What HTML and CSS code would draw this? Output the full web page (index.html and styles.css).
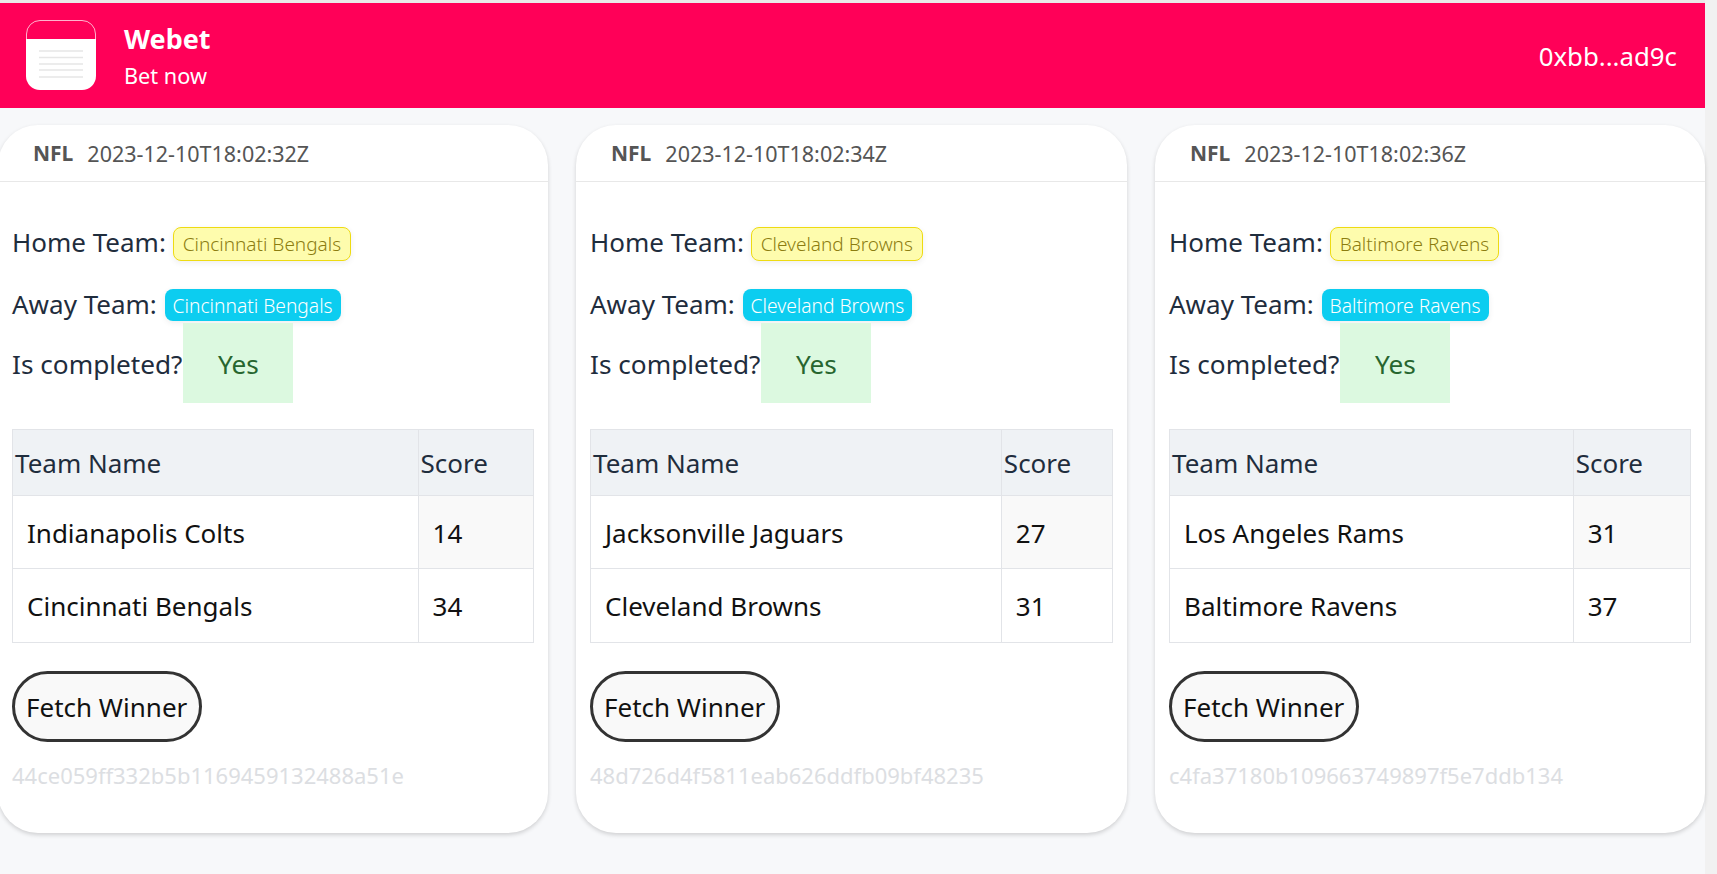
FILE: index.html
```html
<!DOCTYPE html>
<html lang="en">
<head>
  <meta charset="UTF-8">
  <title>Webet</title>
  <link rel="stylesheet" href="styles.css">
</head>
<body>
  <div class="page">
    <header class="topbar">
      <div class="brand">
        <svg class="logo" width="70" height="70" viewBox="0 0 70 70">
          <path d="M0.5 19V14A13.5 13.5 0 0 1 14 0.5H56A13.5 13.5 0 0 1 69.5 14V19" fill="none" stroke="#fff" stroke-opacity="0.7"/>
          <path d="M0 19H70V56A14 14 0 0 1 56 70H14A14 14 0 0 1 0 56Z" fill="#fff"/>
          <path d="M13 31H57M13 37.5H57M13 44H57M13 50H57M13 57H57" stroke="#e6e6e6" stroke-width="1.5"/>
        </svg>
        <div class="brand-text">
          <div class="brand-name">Webet</div>
          <div class="brand-sub">Bet now</div>
        </div>
      </div>
      <div class="address">0xbb...ad9c</div>
    </header>

    <main class="cards">
      <section class="card">
        <div class="card-head"><b>NFL</b><span>2023-12-10T18:02:32Z</span></div>
        <div class="card-body">
          <div class="line line-home">Home Team: <span class="badge badge-home">Cincinnati Bengals</span></div>
          <div class="line line-away">Away Team: <span class="badge badge-away">Cincinnati Bengals</span></div>
          <div class="line line-done">Is completed?<span class="done">Yes</span></div>
          <table class="scores">
            <thead><tr><th>Team Name</th><th>Score</th></tr></thead>
            <tbody>
              <tr><td>Indianapolis Colts</td><td class="alt">14</td></tr>
              <tr><td>Cincinnati Bengals</td><td>34</td></tr>
            </tbody>
          </table>
          <button class="fetch">Fetch Winner</button>
          <div class="hash">44ce059ff332b5b1169459132488a51e</div>
        </div>
      </section>

      <section class="card">
        <div class="card-head"><b>NFL</b><span>2023-12-10T18:02:34Z</span></div>
        <div class="card-body">
          <div class="line line-home">Home Team: <span class="badge badge-home">Cleveland Browns</span></div>
          <div class="line line-away">Away Team: <span class="badge badge-away">Cleveland Browns</span></div>
          <div class="line line-done">Is completed?<span class="done">Yes</span></div>
          <table class="scores">
            <thead><tr><th>Team Name</th><th>Score</th></tr></thead>
            <tbody>
              <tr><td>Jacksonville Jaguars</td><td class="alt">27</td></tr>
              <tr><td>Cleveland Browns</td><td>31</td></tr>
            </tbody>
          </table>
          <button class="fetch">Fetch Winner</button>
          <div class="hash">48d726d4f5811eab626ddfb09bf48235</div>
        </div>
      </section>

      <section class="card">
        <div class="card-head"><b>NFL</b><span>2023-12-10T18:02:36Z</span></div>
        <div class="card-body">
          <div class="line line-home">Home Team: <span class="badge badge-home">Baltimore Ravens</span></div>
          <div class="line line-away">Away Team: <span class="badge badge-away">Baltimore Ravens</span></div>
          <div class="line line-done">Is completed?<span class="done">Yes</span></div>
          <table class="scores">
            <thead><tr><th>Team Name</th><th>Score</th></tr></thead>
            <tbody>
              <tr><td>Los Angeles Rams</td><td class="alt">31</td></tr>
              <tr><td>Baltimore Ravens</td><td>37</td></tr>
            </tbody>
          </table>
          <button class="fetch">Fetch Winner</button>
          <div class="hash">c4fa37180b109663749897f5e7ddb134</div>
        </div>
      </section>
    </main>
  </div>
</body>
</html>
```

FILE: styles.css
```css
html {
  background: #f1f1f1;
}
body {
  margin: 0;
  height: 874px;
  overflow: hidden;
  padding-right: 12px;
  font-family: "Noto Sans", Arial, sans-serif;
  color: #1f2d3d;
}
.page {
  background: #f7f8fa;
  height: 100%;
  border-top: 3px solid #e9e9e9;
  box-sizing: border-box;
}
.topbar {
  background: #ff0058;
  color: #fff;
  height: 105px;
  padding: 0 28px 0 26px;
  display: flex;
  align-items: center;
  justify-content: space-between;
}
.brand {
  display: flex;
  align-items: center;
  gap: 28px;
}
.logo {
  display: block;
  margin-bottom: 1px;
}
.brand-text {
  padding-top: 5px;
}
.brand-name {
  font-size: 27px;
  font-weight: 700;
  line-height: 35px;
}
.brand-sub {
  font-size: 21.7px;
  line-height: 39px;
}
.address {
  font-size: 25.8px;
}
.cards {
  display: grid;
  grid-template-columns: 550px 551px 550px;
  gap: 28px;
  margin: 17px 0 0 -2px;
}
.card {
  background: #fff;
  border-radius: 40px;
  height: 708px;
  box-shadow: 0 2px 4px rgba(0,0,0,0.16);
  overflow: hidden;
}
.card-head {
  height: 57px;
  box-sizing: border-box;
  border-bottom: 1px solid #e8e8e8;
  padding-left: 35px;
  display: flex;
  align-items: center;
  gap: 14px;
  font-size: 21.5px;
  color: #555;
}
.card-head b {
  font-size: 21px;
}
.card-body {
  padding: 0 14px;
}
.line {
  font-size: 26px;
  display: flex;
  align-items: center;
  white-space: pre;
}
.line-home {
  margin-top: 42px;
  height: 35px;
}
.line-away {
  margin-top: 28px;
  height: 33px;
}
.line-done {
  margin-top: 3px;
  height: 80px;
  padding-top: 2px;
  box-sizing: border-box;
  font-size: 26.2px;
}
.badge {
  font-weight: 300;
  border-radius: 8px;
  box-sizing: border-box;
}
.badge-home {
  background: #fefcad;
  color: #8c7d10;
  border: 1px solid #eedb12;
  font-size: 19px;
  height: 34px;
  line-height: 32px;
  margin-top: 4px;
  padding: 0 9px;
  box-shadow: 0 2px 6px rgba(0,0,0,0.07);
}
.badge-away {
  background: #0ccdf0;
  color: #fff;
  font-size: 19.2px;
  height: 32px;
  line-height: 34px;
  margin: 2px 0 0 1px;
  padding: 0 8px;
  box-shadow: 0 2px 6px rgba(0,0,0,0.07);
}
.done {
  background: #dcf9e0;
  color: #27662f;
  width: 110px;
  height: 80px;
  margin: -2px 0 0 1px;
  padding-top: 2px;
  box-sizing: border-box;
  display: flex;
  align-items: center;
  justify-content: center;
}
.scores {
  width: 100%;
  border-collapse: collapse;
  margin-top: 26px;
  font-size: 26px;
}
.scores th,
.scores td {
  border: 1px solid #e2e4e8;
  text-align: left;
}
.scores th {
  background: #eff2f5;
  font-weight: 400;
  height: 65px;
  padding: 0 2px;
}
.scores td {
  color: #111;
  height: 73px;
  padding: 2px 14px 0;
  box-sizing: border-box;
}
.scores tr:last-child td {
  height: 74px;
  padding-top: 0;
}
.scores td.alt {
  background: #f9f9f9;
}
.fetch {
  display: block;
  margin-top: 28px;
  height: 71px;
  padding: 0 12px 0 11px;
  border: 3px solid #333;
  border-radius: 36px;
  background: #f9f9f9;
  color: #111;
  font-family: inherit;
  font-size: 26px;
}
.hash {
  margin-top: 18px;
  font-size: 22px;
  color: #dcdee2;
}
```
